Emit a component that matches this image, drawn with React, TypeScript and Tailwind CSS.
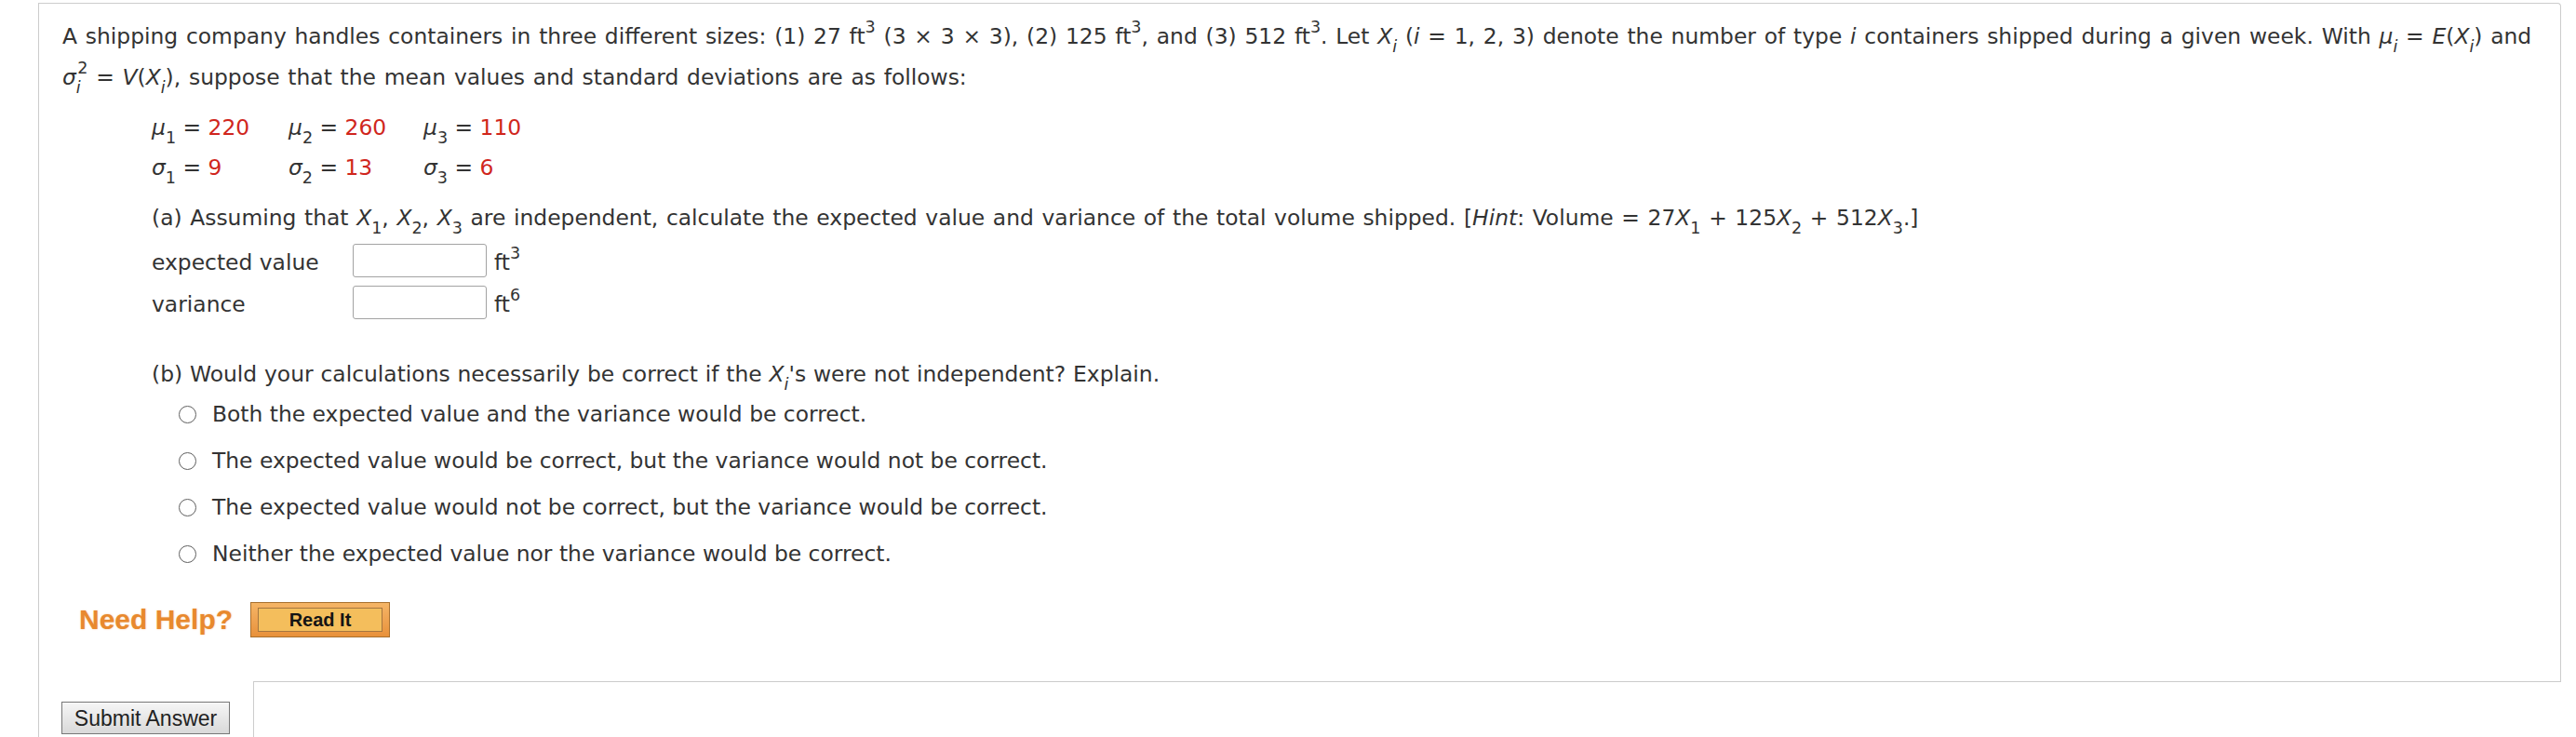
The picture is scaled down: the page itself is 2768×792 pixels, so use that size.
import type { ReactNode } from 'react';
import clsx from 'clsx';

function Sub({ children, it }: { children: ReactNode; it?: boolean }) {
  return <span className={clsx('relative top-[0.5em] text-[0.75em] leading-none', it && 'italic')}>{children}</span>;
}

function Sup({ children, className }: { children: ReactNode; className?: string }) {
  return <span className={clsx('relative -top-[0.68em] text-[0.75em] leading-none', className)}>{children}</span>;
}

function I({ children }: { children: ReactNode }) {
  return <span className="italic">{children}</span>;
}

function R({ children }: { children: ReactNode }) {
  return <span className="text-[#d0261d]">{children}</span>;
}

const options = [
  'Both the expected value and the variance would be correct.',
  'The expected value would be correct, but the variance would not be correct.',
  'The expected value would not be correct, but the variance would be correct.',
  'Neither the expected value nor the variance would be correct.',
];

export default function App() {
  return (
    <div className="w-[2768px] h-[792px] bg-white pt-[3px] pl-[41px] overflow-hidden">
      <div className="w-[2711px] h-[789px] border-l border-[#cccccc] flex flex-col">
        {/* question body */}
        <div className="h-[729px] shrink-0 border-t border-r border-[#cccccc] rounded-tr-[4px] pl-[25px] pt-[13px] font-['DejaVu_Sans',Verdana,sans-serif] text-[23.4px] text-[#333333]">
          <p className="leading-[44px] whitespace-nowrap [word-spacing:1.35px]">
            A shipping company handles containers in three different sizes: (1) 27 ft<Sup>3</Sup> (3 × 3 × 3), (2) 125 ft<Sup>3</Sup>, and (3) 512 ft<Sup>3</Sup>. Let <I>X</I><Sub it>i</Sub> (<I>i</I> = 1, 2, 3) denote the number of type <I>i</I> containers shipped during a given week. With <I>μ</I><Sub it>i</Sub> = <I>E</I>(<I>X</I><Sub it>i</Sub>) and
            <br />
            <I>σ</I><Sub it>i</Sub><Sup className="-ml-[0.2em]">2</Sup> = <I>V</I>(<I>X</I><Sub it>i</Sub>), suppose that the mean values and standard deviations are as follows:
          </p>

          <div className="ml-[96px]">
            {/* means and standard deviations */}
            <div className="mt-[11px] grid grid-cols-[147px_145px_auto] leading-[43px] whitespace-nowrap">
              <div><I>μ</I><Sub>1</Sub> = <R>220</R></div>
              <div><I>μ</I><Sub>2</Sub> = <R>260</R></div>
              <div><I>μ</I><Sub>3</Sub> = <R>110</R></div>
              <div><I>σ</I><Sub>1</Sub> = <R>9</R></div>
              <div><I>σ</I><Sub>2</Sub> = <R>13</R></div>
              <div><I>σ</I><Sub>3</Sub> = <R>6</R></div>
            </div>

            {/* part a */}
            <p className="mt-[10px] leading-[44px] whitespace-nowrap [word-spacing:1.2px]">
              (a) Assuming that <I>X</I><Sub>1</Sub>, <I>X</I><Sub>2</Sub>, <I>X</I><Sub>3</Sub> are independent, calculate the expected value and variance of the total volume shipped. [<I>Hint</I>: Volume = 27<I>X</I><Sub>1</Sub> + 125<I>X</I><Sub>2</Sub> + 512<I>X</I><Sub>3</Sub>.]
            </p>
            <div className="mt-[6px] h-[36px] flex items-start">
              <span className="w-[216px] leading-[40px]">expected value</span>
              <input className="w-[144px] h-[36px] border border-[#a3a3a3] rounded-[3px] bg-white outline-none" />
              <span className="ml-[8px] leading-[40px]">ft<Sup>3</Sup></span>
            </div>
            <div className="mt-[9px] h-[36px] flex items-start">
              <span className="w-[216px] leading-[40px]">variance</span>
              <input className="w-[144px] h-[36px] border border-[#a3a3a3] rounded-[3px] bg-white outline-none" />
              <span className="ml-[8px] leading-[40px]">ft<Sup>6</Sup></span>
            </div>

            {/* part b */}
            <p className="mt-[41px] leading-[36px] whitespace-nowrap [word-spacing:0.4px]">
              (b) Would your calculations necessarily be correct if the <I>X</I><Sub it>i</Sub>'s were not independent? Explain.
            </p>
            <div className="ml-[29px]">
              {options.map((o) => (
                <label key={o} className="h-[50px] flex items-center whitespace-nowrap">
                  <span className="w-[19px] h-[19px] rounded-full border-[1.5px] border-[#5f5f5f] bg-white shrink-0" />
                  <span className="ml-[17px] leading-[50px]">{o}</span>
                </label>
              ))}
            </div>
          </div>

          {/* help */}
          <div className="mt-[27px] ml-[18px] h-[38px] flex items-center">
            <span className="w-[184px] font-['Liberation_Sans',Arial,sans-serif] font-bold text-[30px] leading-[38px] text-[#e8892e] [text-shadow:0_0_2px_#f6c79a]">
              Need Help?
            </span>
            <button className="w-[150px] h-[38px] border border-[#a8702e] bg-linear-to-b from-[#f5b566] to-[#e8913a] px-[7px] py-[5px]">
              <span className="flex items-center justify-center w-full h-full border border-[#a57640] bg-[#f4be5c] font-['Liberation_Sans',Arial,sans-serif] font-bold text-[20px] text-[#141414]">
                Read It
              </span>
            </button>
          </div>
        </div>

        {/* submit row */}
        <div className="flex flex-1">
          <div className="w-[230px] shrink-0 pl-[24px] pt-[22px]">
            <button className="w-[181px] h-[35px] border border-[#777777] bg-linear-to-b from-[#f6f6f6] to-[#d9d9d9] font-['Liberation_Sans',Arial,sans-serif] text-[23px] text-[#222222]">
              Submit Answer
            </button>
          </div>
          <div className="flex-1 border-t border-l border-[#cccccc]" />
        </div>
      </div>
    </div>
  );
}
